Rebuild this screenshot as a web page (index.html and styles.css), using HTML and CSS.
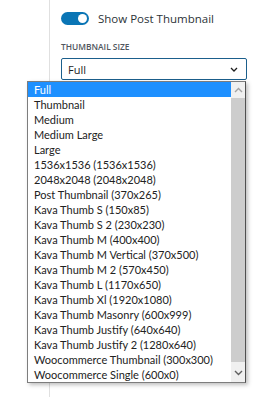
FILE: index.html
```html
<!DOCTYPE html>
<html lang="en">

<head>
    <meta charset="UTF-8">
    <meta name="viewport" content="width=device-width, initial-scale=1.0">
    <title>Thumbnail settings</title>
    <link rel="stylesheet" href="styles.css">
</head>

<body>
    <div class="panel">
        <div class="toggle-row">
            <span class="toggle"><span class="knob"></span></span>
            <span class="toggle-label">Show Post Thumbnail</span>
        </div>

        <div class="field">
            <div class="field-label">Thumbnail Size</div>
            <div class="select">
                <span class="select-value">Full</span>
                <svg class="select-arrow" width="8" height="5" viewBox="0 0 8 5">
                    <path d="M1 1l3 3 3-3" fill="none" stroke="#1e1e1e" stroke-width="1.3" />
                </svg>

                <!-- opened option list lies over the page -->
                <div class="dropdown">
                    <ul class="options">
                        <li class="option active">Full</li>
                        <li class="option">Thumbnail</li>
                        <li class="option">Medium</li>
                        <li class="option">Medium Large</li>
                        <li class="option">Large</li>
                        <li class="option">1536x1536 (1536x1536)</li>
                        <li class="option">2048x2048 (2048x2048)</li>
                        <li class="option">Post Thumbnail (370x265)</li>
                        <li class="option">Kava Thumb S (150x85)</li>
                        <li class="option">Kava Thumb S 2 (230x230)</li>
                        <li class="option">Kava Thumb M (400x400)</li>
                        <li class="option">Kava Thumb M Vertical (370x500)</li>
                        <li class="option">Kava Thumb M 2 (570x450)</li>
                        <li class="option">Kava Thumb L (1170x650)</li>
                        <li class="option">Kava Thumb Xl (1920x1080)</li>
                        <li class="option">Kava Thumb Masonry (600x999)</li>
                        <li class="option">Kava Thumb Justify (640x640)</li>
                        <li class="option">Kava Thumb Justify 2 (1280x640)</li>
                        <li class="option">Woocommerce Thumbnail (300x300)</li>
                        <li class="option">Woocommerce Single (600x0)</li>
                    </ul>
                    <div class="scrollbar">
                        <span class="scroll-btn">
                            <svg width="9" height="6" viewBox="0 0 9 6">
                                <path d="M1 5l3.5-3.5L8 5" fill="none" stroke="#a3a3a3" stroke-width="1.4" />
                            </svg>
                        </span>
                        <span class="scroll-thumb"></span>
                        <span class="scroll-btn">
                            <svg width="9" height="6" viewBox="0 0 9 6">
                                <path d="M1 1l3.5 3.5L8 1" fill="none" stroke="#606060" stroke-width="1.4" />
                            </svg>
                        </span>
                    </div>
                </div>
            </div>
        </div>
    </div>
</body>

</html>
```

FILE: styles.css
```css
body {
    margin: 0;
    background: #fff;
    font-family: "Open Sans", "Noto Sans", sans-serif;
    color: #1e1e1e;
}

.panel {
    margin-left: 49px;
    min-height: 397px;
    box-sizing: border-box;
    border-left: 1px solid #e0e0e0;
    padding: 11px 12px 0 11px;
}

.toggle-row {
    display: flex;
    align-items: center;
    gap: 9px;
}

.toggle {
    display: flex;
    justify-content: flex-end;
    align-items: center;
    width: 28px;
    height: 13px;
    padding: 0 2px;
    box-sizing: border-box;
    border-radius: 7px;
    background: #0a75b5;
}

.toggle .knob {
    width: 9px;
    height: 9px;
    border-radius: 50%;
    background: #fff;
}

.toggle-label {
    font-size: 11.5px;
    color: #2c3338;
}

.field {
    margin-top: 15px;
}

.field-label {
    font-size: 8.4px;
    font-weight: 600;
    text-transform: uppercase;
    color: #50575e;
}

.select {
    position: relative;
    display: flex;
    align-items: center;
    justify-content: space-between;
    margin-top: 6px;
    height: 22px;
    box-sizing: border-box;
    border: 1px solid #1b5f8c;
    border-radius: 2px;
    padding: 0 8px 0 6px;
    font-size: 11px;
}

.dropdown {
    position: absolute;
    left: -35px;
    top: 22px;
    width: 219px;
    display: flex;
    box-sizing: border-box;
    border: 1px solid #7d7d7d;
    border-right-color: #505050;
    background: #fff;
    box-shadow: 2px 2px 4px rgba(0, 0, 0, .25);
    font-family: Lato, "Open Sans", sans-serif;
}

.options {
    flex: 1;
    list-style: none;
    margin: 0;
    padding: 0;
}

.option {
    height: 15px;
    line-height: 16px;
    padding-left: 6px;
    font-size: 11px;
    white-space: nowrap;
    overflow: hidden;
    color: #222;
}

.option.active {
    background: #1e90ff;
    color: #fff;
}

.scrollbar {
    display: flex;
    flex-direction: column;
    width: 14px;
    background: #f0f0f0;
}

.scroll-btn {
    display: flex;
    align-items: center;
    justify-content: center;
    height: 15px;
}

.scroll-btn:last-child {
    height: 19px;
}

.scroll-thumb {
    flex: 1;
    margin: 1px 0;
    background: #cdcdcd;
}
```
